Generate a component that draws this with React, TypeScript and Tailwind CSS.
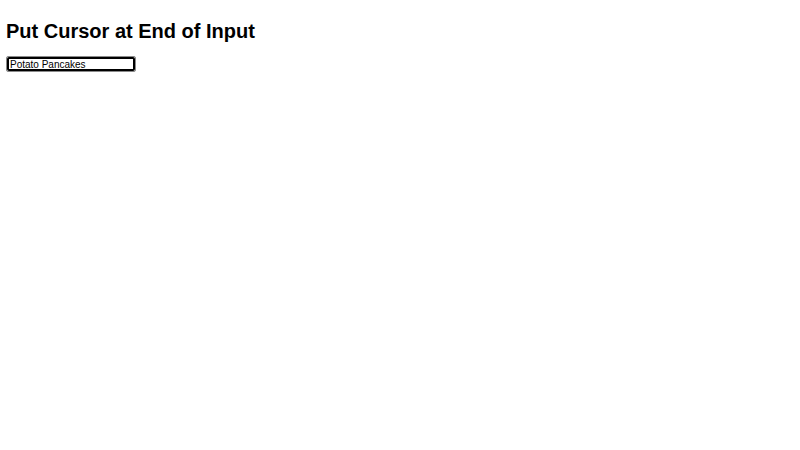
import React from "react";

export default function App() {
  return (
    <div className="min-h-[450px] w-[800px] bg-white px-[6px] pt-[18px] text-black" style={{ fontFamily: '"Liberation Sans", Arial, sans-serif' }}>
      <h1 className="text-[20px] font-bold leading-[26px]">Put Cursor at End of Input</h1>
      <div className="mt-[12px] flex">
        <div className="h-[16px] w-[130px] rounded-[2px] border border-[#8a8a8a]">
          <input
            readOnly
            defaultValue="Potato Pancakes"
            className="block h-full w-full rounded-[2px] border-2 border-black bg-white px-[1px] py-0 text-[10px] leading-[10px] outline-none"
          />
        </div>
      </div>
    </div>
  );
}
